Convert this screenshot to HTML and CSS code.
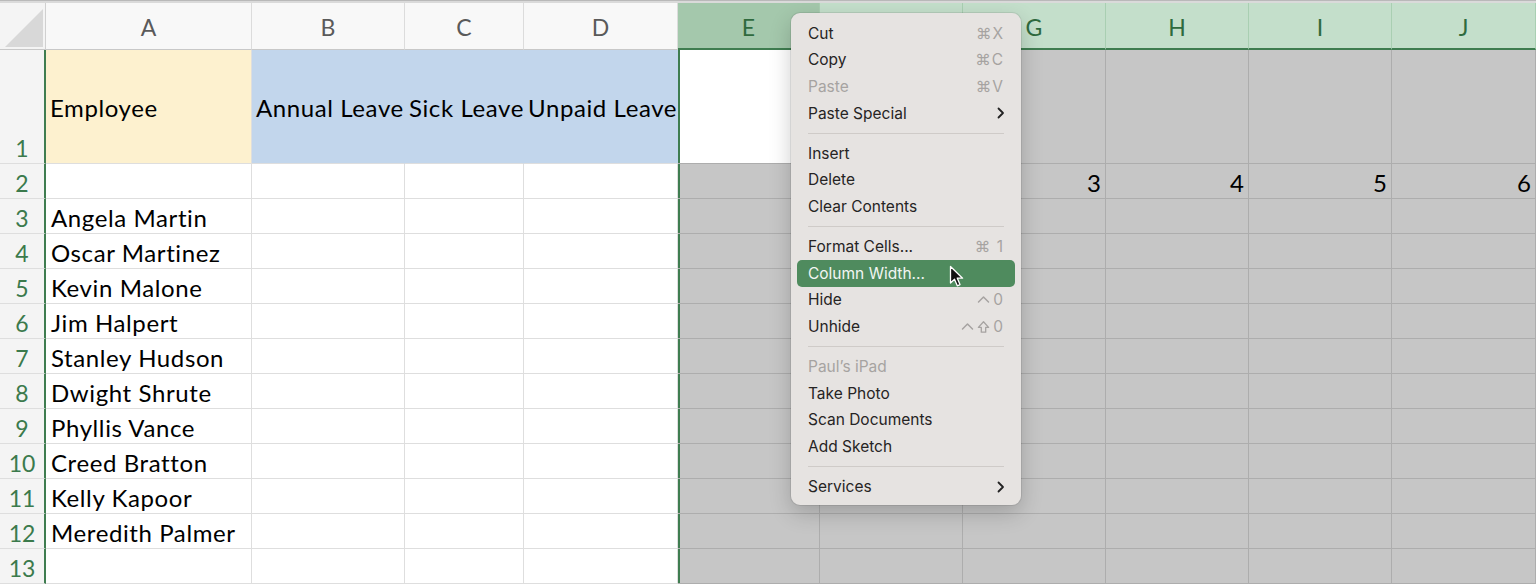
FILE: index.html
```html
<!DOCTYPE html>
<html lang="en">
<head>
<meta charset="UTF-8">
<title>Leave tracker</title>
<link rel="stylesheet" href="styles.css">
</head>
<body>

<div class="topbar"></div>

<div class="sheet">
  <!-- column headers -->
  <div class="corner"><div class="tri"></div></div>
  <div class="ch">A</div><div class="ch">B</div><div class="ch">C</div><div class="ch">D</div>
  <div class="ch on cur">E</div><div class="ch on">F</div><div class="ch on">G</div><div class="ch on">H</div><div class="ch on">I</div><div class="ch on">J</div>

  <!-- row 1 -->
  <div class="rh first">1</div>
  <div class="cell mid yellow">Employee</div>
  <div class="cell mid blue">Annual Leave</div>
  <div class="cell mid blue">Sick Leave</div>
  <div class="cell mid blue">Unpaid Leave</div>
  <div class="cell act edge"></div><div class="cell sel"></div><div class="cell sel"></div><div class="cell sel"></div><div class="cell sel"></div><div class="cell sel"></div>

  <!-- row 2 -->
  <div class="rh">2</div>
  <div class="cell"></div><div class="cell"></div><div class="cell"></div><div class="cell"></div>
  <div class="cell sel edge"></div><div class="cell sel"></div><div class="cell sel num">3</div><div class="cell sel num">4</div><div class="cell sel num">5</div><div class="cell sel num">6</div>

  <div class="rh">3</div>
  <div class="cell">Angela Martin</div><div class="cell"></div><div class="cell"></div><div class="cell"></div>
  <div class="cell sel edge"></div><div class="cell sel"></div><div class="cell sel"></div><div class="cell sel"></div><div class="cell sel"></div><div class="cell sel"></div>

  <div class="rh">4</div>
  <div class="cell">Oscar Martinez</div><div class="cell"></div><div class="cell"></div><div class="cell"></div>
  <div class="cell sel edge"></div><div class="cell sel"></div><div class="cell sel"></div><div class="cell sel"></div><div class="cell sel"></div><div class="cell sel"></div>

  <div class="rh">5</div>
  <div class="cell">Kevin Malone</div><div class="cell"></div><div class="cell"></div><div class="cell"></div>
  <div class="cell sel edge"></div><div class="cell sel"></div><div class="cell sel"></div><div class="cell sel"></div><div class="cell sel"></div><div class="cell sel"></div>

  <div class="rh">6</div>
  <div class="cell">Jim Halpert</div><div class="cell"></div><div class="cell"></div><div class="cell"></div>
  <div class="cell sel edge"></div><div class="cell sel"></div><div class="cell sel"></div><div class="cell sel"></div><div class="cell sel"></div><div class="cell sel"></div>

  <div class="rh">7</div>
  <div class="cell">Stanley Hudson</div><div class="cell"></div><div class="cell"></div><div class="cell"></div>
  <div class="cell sel edge"></div><div class="cell sel"></div><div class="cell sel"></div><div class="cell sel"></div><div class="cell sel"></div><div class="cell sel"></div>

  <div class="rh">8</div>
  <div class="cell">Dwight Shrute</div><div class="cell"></div><div class="cell"></div><div class="cell"></div>
  <div class="cell sel edge"></div><div class="cell sel"></div><div class="cell sel"></div><div class="cell sel"></div><div class="cell sel"></div><div class="cell sel"></div>

  <div class="rh">9</div>
  <div class="cell">Phyllis Vance</div><div class="cell"></div><div class="cell"></div><div class="cell"></div>
  <div class="cell sel edge"></div><div class="cell sel"></div><div class="cell sel"></div><div class="cell sel"></div><div class="cell sel"></div><div class="cell sel"></div>

  <div class="rh">10</div>
  <div class="cell">Creed Bratton</div><div class="cell"></div><div class="cell"></div><div class="cell"></div>
  <div class="cell sel edge"></div><div class="cell sel"></div><div class="cell sel"></div><div class="cell sel"></div><div class="cell sel"></div><div class="cell sel"></div>

  <div class="rh">11</div>
  <div class="cell">Kelly Kapoor</div><div class="cell"></div><div class="cell"></div><div class="cell"></div>
  <div class="cell sel edge"></div><div class="cell sel"></div><div class="cell sel"></div><div class="cell sel"></div><div class="cell sel"></div><div class="cell sel"></div>

  <div class="rh">12</div>
  <div class="cell">Meredith Palmer</div><div class="cell"></div><div class="cell"></div><div class="cell"></div>
  <div class="cell sel edge"></div><div class="cell sel"></div><div class="cell sel"></div><div class="cell sel"></div><div class="cell sel"></div><div class="cell sel"></div>

  <div class="rh">13</div>
  <div class="cell"></div><div class="cell"></div><div class="cell"></div><div class="cell"></div>
  <div class="cell sel edge"></div><div class="cell sel"></div><div class="cell sel"></div><div class="cell sel"></div><div class="cell sel"></div><div class="cell sel"></div>
</div>

<!-- right click menu -->
<div class="menu">
  <div class="item"><span>Cut</span><span class="key">&#8984;X</span></div>
  <div class="item"><span>Copy</span><span class="key">&#8984;C</span></div>
  <div class="item off"><span>Paste</span><span class="key">&#8984;V</span></div>
  <div class="item"><span>Paste Special</span><svg class="chev" width="8" height="12" viewBox="0 0 8 12"><path d="M1.5 1.5 L6 6 L1.5 10.5" fill="none" stroke="#222" stroke-width="1.8" stroke-linecap="round" stroke-linejoin="round"/></svg></div>
  <div class="sep"></div>
  <div class="item"><span>Insert</span></div>
  <div class="item"><span>Delete</span></div>
  <div class="item"><span>Clear Contents</span></div>
  <div class="sep"></div>
  <div class="item"><span>Format Cells...</span><span class="key">&#8984; 1</span></div>
  <div class="item hot"><span>Column Width...</span></div>
  <div class="item"><span>Hide</span><span class="key"><svg class="mod" width="13" height="14" viewBox="0 0 13 14"><path d="M1.5 9 L6.5 4 L11.5 9" fill="none" stroke="#a6a3a1" stroke-width="1.5" stroke-linecap="round" stroke-linejoin="round"/></svg>0</span></div>
  <div class="item"><span>Unhide</span><span class="key"><svg class="mod" width="13" height="14" viewBox="0 0 13 14"><path d="M1.5 9 L6.5 4 L11.5 9" fill="none" stroke="#a6a3a1" stroke-width="1.5" stroke-linecap="round" stroke-linejoin="round"/></svg><svg class="mod" width="13" height="14" viewBox="0 0 13 14"><path d="M6.5 1.8 L11.6 7.4 L8.7 7.4 L8.7 12.2 L4.3 12.2 L4.3 7.4 L1.4 7.4 Z" fill="none" stroke="#a6a3a1" stroke-width="1.3" stroke-linejoin="round"/></svg>0</span></div>
  <div class="sep"></div>
  <div class="item off"><span>Paul’s iPad</span></div>
  <div class="item"><span>Take Photo</span></div>
  <div class="item"><span>Scan Documents</span></div>
  <div class="item"><span>Add Sketch</span></div>
  <div class="sep"></div>
  <div class="item"><span>Services</span><svg class="chev" width="8" height="12" viewBox="0 0 8 12"><path d="M1.5 1.5 L6 6 L1.5 10.5" fill="none" stroke="#222" stroke-width="1.8" stroke-linecap="round" stroke-linejoin="round"/></svg></div>
</div>

<svg class="pointer" width="16" height="24" viewBox="0 0 16 24">
  <path d="M1.5 1.5 L1.5 18 L5.5 14.2 L8.3 20.8 L11 19.6 L8.3 13.2 L13.6 13.2 Z" fill="#111" stroke="#fff" stroke-width="1.3" stroke-linejoin="round"/>
</svg>

</body>
</html>
```

FILE: styles.css
```css
:root{
  --grid: #dedede;
  --selgrid: #adadad;
  --green: #3f7d50;
  --cellfont: Lato, "Open Sans", sans-serif;
  --menufont: Inter, "Liberation Sans", sans-serif;
}

*{
  box-sizing: border-box;
}

body {
  margin: 0;
  width: 1536px;
  height: 584px;
  overflow: hidden;
  position: relative;
  background-color: #fff;
  font-family: var(--cellfont);
}

.topbar {
  height: 3px;
  background-color: #dadada;
  border-top: 1px solid #b9b9b9;
}

.sheet {
  display: grid;
  grid-template-columns: 46px 206px 153px 119px 154px 142px 143px 143px 143px 143px 144px;
  grid-template-rows: 47px 114px repeat(12, 35px);
}

/* headers */
.corner {
  background-color: #f4f4f4;
  border-right: 1px solid #d0d0d0;
  border-bottom: 1px solid #c8c8c8;
  position: relative;
}

.tri {
  position: absolute;
  left: 5px;
  top: 6px;
  width: 38px;
  height: 38px;
  background-color: #d8d8d8;
  clip-path: polygon(100% 0, 100% 100%, 0 100%);
}

.ch {
  display: flex;
  align-items: center;
  justify-content: center;
  font-size: 23px;
  color: #5a5a5a;
  background-color: #f8f8f8;
  border-right: 1px solid #dcdcdc;
  border-bottom: 1px solid #c8c8c8;
  padding-top: 2px;
}

.ch.on {
  background-color: #c4dfcb;
  color: #2f6a3e;
  border-right-color: #a9cfb2;
  border-bottom: 2px solid var(--green);
}

.ch.cur {
  background-color: #a4c8ac;
}

.rh {
  display: flex;
  align-items: center;
  justify-content: center;
  font-size: 23px;
  color: #3b7a4c;
  background-color: #f4f4f4;
  border-right: 2px solid var(--green);
  border-bottom: 1px solid var(--grid);
  padding-top: 3px;
}

.rh.first {
  align-items: flex-end;
  padding-bottom: 1px;
}

/* cells */
.cell {
  display: flex;
  align-items: center;
  padding: 3px 4px 0 5px;
  font-size: 24px;
  letter-spacing: 0.6px;
  color: #000;
  white-space: nowrap;
  overflow: hidden;
  border-right: 1px solid var(--grid);
  border-bottom: 1px solid var(--grid);
}

.cell.mid {
  padding-top: 2px;
  padding-left: 4px;
}

.yellow {
  background-color: #fdf1cf;
  padding-left: 6px;
}

.blue {
  background-color: #c2d6ec;
  border-right-color: #c2d6ec;
}

.sel {
  background-color: #c6c6c6;
  border-color: var(--selgrid);
}

.act {
  background-color: #fff;
  border-bottom-color: var(--selgrid);
  border-right-color: var(--selgrid);
}

.edge {
  box-shadow: inset 2px 0 0 var(--green);
}

.num {
  justify-content: flex-end;
  letter-spacing: 0;
}

/* context menu */
.menu {
  position: absolute;
  left: 791px;
  top: 13px;
  width: 230px;
  height: 492px;
  padding: 7px 6px;
  background-color: #e6e3e1;
  border-radius: 9px;
  box-shadow: 0 0 0 1px rgba(0,0,0,0.08), 0 8px 22px rgba(0,0,0,0.2);
  font-family: var(--menufont);
  font-size: 15.5px;
  color: #262424;
}

.item {
  height: 26.67px;
  display: flex;
  align-items: center;
  justify-content: space-between;
  padding: 0 11px;
  border-radius: 5px;
}

.item.off {
  color: #a6a3a1;
}

.item.hot {
  background-color: #4f8b5e;
  color: #f2f6f2;
}

.key {
  display: flex;
  align-items: center;
  color: #a6a3a1;
  font-size: 15.5px;
  letter-spacing: 1px;
  white-space: pre;
}

.mod {
  margin-right: 3px;
}

.chev {
  margin-right: -1px;
}

.sep {
  height: 1px;
  margin: 6.2px 11px;
  background-color: #cfcbc8;
}

.pointer {
  position: absolute;
  left: 949px;
  top: 265px;
}
```
